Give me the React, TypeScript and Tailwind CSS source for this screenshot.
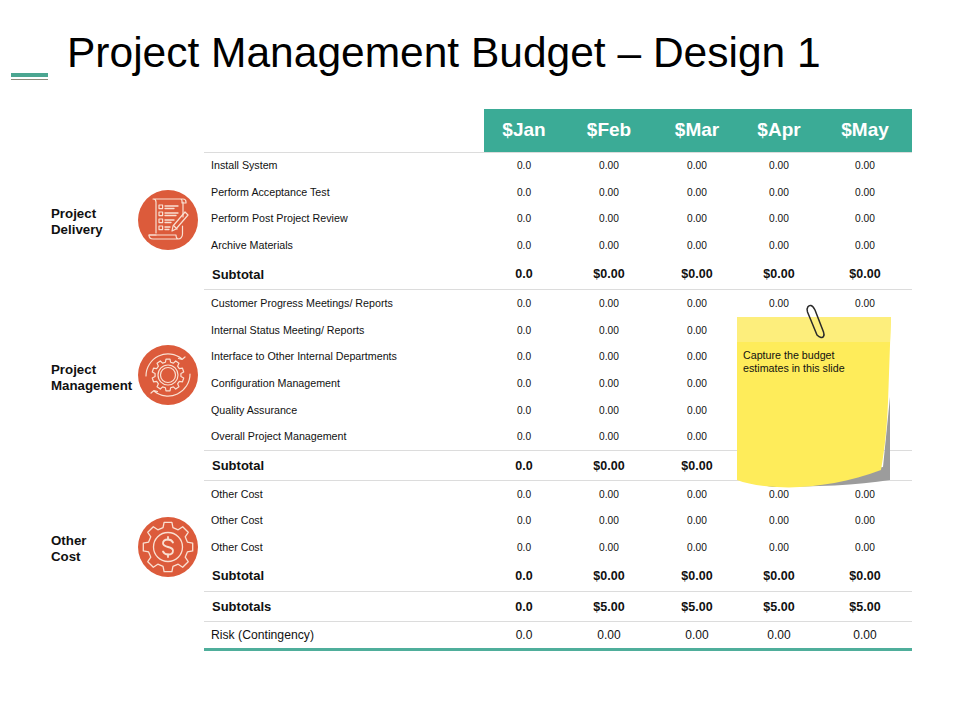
const COLS = "grid grid-cols-[280px_80px_90px_86px_78px_94px] items-center";

function Row({ label, first, vals, h, labelCls, valCls, border }: { label: string; first: string; vals: string; h: string; labelCls: string; valCls: string; border?: string }) {
  return (
    <div className={`${COLS} ${h} ${border ?? ""}`}>
      <div className={labelCls}>{label}</div>
      <div className={`text-center ${valCls}`}>{first}</div>
      {[0, 1, 2, 3].map((i) => (
        <div key={i} className={`text-center ${valCls}`}>{vals}</div>
      ))}
    </div>
  );
}

const NORMAL = "pl-[7px] pb-[1.5px] text-[10.7px] text-[#111]";
const VAL = "text-[10.2px] text-[#111]";
const BOLD = "pl-[8px] text-[13px] font-bold text-[#111]";
const BVAL = "text-[12.5px] font-bold text-[#111]";
const LINE = "border-b-[1.5px] border-[#dcdcdc]";

function Items({ items, h }: { items: string[]; h: string }) {
  return (
    <>
      {items.map((t, i) => (
        <Row key={i} label={t} first="0.0" vals="0.00" h={h} labelCls={NORMAL} valCls={VAL} />
      ))}
    </>
  );
}

function DocIcon() {
  return (
    <svg viewBox="0 0 60 60" className="w-[60px] h-[60px]" fill="none" stroke="#f9e0d2" strokeWidth="1.2" strokeLinecap="round" strokeLinejoin="round">
      <circle cx="30" cy="30" r="30" fill="#dc5b3b" stroke="none" />
      <path d="M18 43V12c0-2-1-3-3-3h30c2 0 3 1 3 3v1h-4v-2c0-1-1-2-2-2" />
      <path d="M45 12v15M44.5 36v8c0 3-2 5-4 5H15c-3 0-4-2-4-4h27c0 2 1 4 3 4" />
      <path d="M11 45h7" />
      <rect x="21" y="15" width="3.6" height="3.6" />
      <rect x="21" y="22" width="3.6" height="3.6" />
      <rect x="21" y="29" width="3.6" height="3.6" />
      <rect x="21" y="36" width="3.6" height="3.6" />
      <path d="M27 16h13M27 18.500h9M27 23h13M27 25.500h11M27 30h9M27 32.500h6M27 37h5M27 39.500h4" strokeWidth="1.3" />
      <path d="M34 41l1-5L47 22l3 3-12 14z" />
      <path d="M36 36l3 3" />
    </svg>
  );
}

function GearPath({ teeth, r1, r2, cx = 30, cy = 30 }: { teeth: number; r1: number; r2: number; cx?: number; cy?: number }) {
  let d = "";
  const step = (Math.PI * 2) / teeth;
  for (let i = 0; i < teeth; i++) {
    const a = i * step - Math.PI / 2;
    const p = (r: number, o: number) => `${(cx + r * Math.cos(a + o)).toFixed(2)} ${(cy + r * Math.sin(a + o)).toFixed(2)}`;
    d += `${i === 0 ? "M" : "L"}${p(r1, -step * 0.32)} L${p(r2, -step * 0.2)} L${p(r2, step * 0.2)} L${p(r1, step * 0.32)} `;
  }
  return <path d={d + "Z"} />;
}

function CycleIcon() {
  return (
    <svg viewBox="0 0 60 60" className="w-[60px] h-[60px]" fill="none" stroke="#f9e0d2" strokeWidth="1.2" strokeLinecap="round" strokeLinejoin="round">
      <circle cx="30" cy="30" r="30" fill="#dc5b3b" stroke="none" />
      <GearPath teeth={10} r1={13} r2={16} />
      <circle cx="30" cy="30" r="10" />
      <circle cx="30" cy="30" r="7.500" />
      <path d="M8 31a22 22 0 0 1 36-17M47 12l-3 2.500-3.500-1" />
      <path d="M52 29a22 22 0 0 1-36 17M13 48l3-2.500 3.500 1" />
    </svg>
  );
}

function MoneyIcon() {
  return (
    <svg viewBox="0 0 60 60" className="w-[60px] h-[60px]" fill="none" stroke="#f9e0d2" strokeWidth="1.3" strokeLinecap="round" strokeLinejoin="round">
      <circle cx="30" cy="30" r="30" fill="#dc5b3b" stroke="none" />
      <GearPath teeth={8} r1={20} r2={25} />
      <circle cx="30" cy="30" r="14.500" />
      <path d="M35 25.500c-1-2-3-3-5-3-3 0-5 1.500-5 3.800 0 5 10 2.400 10 7.400 0 2.300-2 3.800-5 3.800-2 0-4-1-5-3" strokeWidth="1.8" />
      <path d="M30 20v2.500M30 37.500V40" strokeWidth="1.8" />
    </svg>
  );
}

function Group({ cls, labelCls, lines, icon }: { cls: string; labelCls: string; lines: string[]; icon: React.ReactNode }) {
  return (
    <div className={`flex items-center pl-[51px] ${cls}`}>
      <div className={`w-[87px] text-[13.3px] leading-[16px] font-bold text-[#111] ${labelCls}`}>
        {lines.map((l) => (
          <div key={l}>{l}</div>
        ))}
      </div>
      {icon}
    </div>
  );
}

function Sticky() {
  return (
    <div className="absolute left-[533px] top-[208px] w-[154px] h-[171px]">
      <svg viewBox="0 0 154 171" className="absolute inset-0 w-[154px] h-[171px]">
        <path d="M30 170 C80 170 120 168 153 163 L153 80 L146 150 Z" fill="#9c9c9c" />
        <path d="M0 0H154L151 85C150 110 148 130 144 153C110 166 70 172 40 170C24 169 10 167 0 163Z" fill="#feec5a" />
        <path d="M0 0H154L153 25H0Z" fill="#fdee7c" />
      </svg>
      <svg viewBox="0 0 22 36" className="absolute left-[68px] top-[-13px] w-[22px] h-[36px]" fill="none" stroke="#2a2a2a" strokeWidth="1.5" strokeLinecap="round" strokeLinejoin="round">
        <path d="M12 31 L2.500 8 C1 3 4 1 6 1.500 C8 2 9 4 10 6 L18.500 28 C20 32 18 34 16 33.500 C14 33 13 32 12 31 Z" />
      </svg>
      <div className="relative pl-[6px] pt-[32px] text-[10.7px] leading-[13px] text-[#111]">
        <div>Capture the budget</div>
        <div>estimates in this slide</div>
      </div>
    </div>
  );
}

export default function App() {
  return (
    <div className="w-[960px] h-[720px] bg-white overflow-hidden font-['Liberation_Sans',Arial,sans-serif]">
      <div className="flex h-[109px]">
        <div className="ml-[11px] mt-[73px] w-[37px] h-[7px] border-t-[4px] border-b border-t-[#4ba691] border-b-[#8a8a7a]" />
        <h1 className="ml-[19px] mt-[29px] text-[42.5px] leading-[48px] text-black">Project Management Budget – Design 1</h1>
      </div>
      <div className="flex">
        <div className="w-[204px] pt-[43px]">
          <Group cls="h-[138px] pb-[2px]" labelCls="pt-[4px]" lines={["Project", "Delivery"]} icon={<DocIcon />} />
          <Group cls="h-[190px] pb-[20px]" labelCls="pt-[6px]" lines={["Project", "Management"]} icon={<CycleIcon />} />
          <Group cls="h-[111px] pt-[23px]" labelCls="pt-[4px]" lines={["Other", "Cost"]} icon={<MoneyIcon />} />
        </div>
        <div className="relative w-[708px]">
          <div className={`${COLS} h-[43.5px] ${LINE}`}>
            <div />
            {["$Jan", "$Feb", "$Mar", "$Apr", "$May"].map((m) => (
              <div key={m} className="h-full flex items-center justify-center bg-[#3bab96] text-white font-bold text-[19px]">{m}</div>
            ))}
          </div>
          <Items h="h-[26.6px]" items={["Install System", "Perform Acceptance Test", "Perform Post Project Review", "Archive Materials"]} />
          <Row label="Subtotal" first="0.0" vals="$0.00" h="h-[31.6px] pt-[1px]" labelCls={BOLD} valCls={BVAL} border={LINE} />
          <Items h="h-[26.67px]" items={["Customer Progress Meetings/ Reports", "Internal Status Meeting/ Reports", "Interface to Other Internal Departments", "Configuration Management", "Quality Assurance", "Overall Project Management"]} />
          <Row label="Subtotal" first="0.0" vals="$0.00" h="h-[31px]" labelCls={BOLD} valCls={BVAL} border={`${LINE} border-t-[1.5px]`} />
          <Items h="h-[26.4px]" items={["Other Cost", "Other Cost", "Other Cost"]} />
          <Row label="Subtotal" first="0.0" vals="$0.00" h="h-[31.8px]" labelCls={BOLD} valCls={BVAL} border={LINE} />
          <Row label="Subtotals" first="0.0" vals="$5.00" h="h-[30px]" labelCls={BOLD} valCls={BVAL} border={LINE} />
          <Row label="Risk (Contingency)" first="0.0" vals="0.00" h="h-[28.5px]" labelCls="pl-[7px] text-[12.2px] text-[#111]" valCls="text-[12px] text-[#111]" border="border-b-[3px] border-[#4fae9b]" />
          <Sticky />
        </div>
      </div>
    </div>
  );
}
